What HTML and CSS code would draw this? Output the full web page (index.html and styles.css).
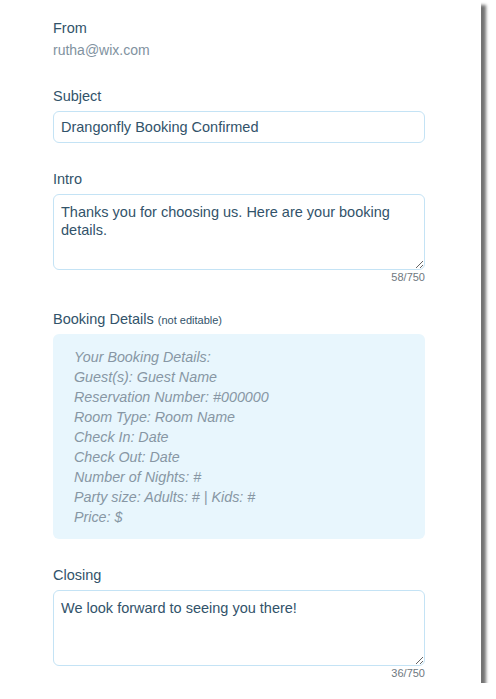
FILE: index.html
```html
<!DOCTYPE html>
<html lang="en">
<head>
    <meta charset="UTF-8">
    <meta name="viewport" content="width=device-width, initial-scale=1.0">
    <title>Confirmation Email</title>
    <link rel="stylesheet" href="styles.css">
</head>
<body>
    <div class="panel">
        <div class="field">
            <div class="label">From</div>
            <div class="sender">rutha@wix.com</div>
        </div>

        <div class="field">
            <label class="label" for="subject">Subject</label>
            <input type="text" id="subject" class="input" value="Drangonfly Booking Confirmed">
        </div>

        <div class="field">
            <label class="label" for="intro">Intro</label>
            <textarea id="intro" class="textarea">Thanks you for choosing us. Here are your booking details.</textarea>
            <div class="counter">58/750</div>
        </div>

        <div class="field">
            <div class="label">Booking Details <span class="note">(not editable)</span></div>
            <div class="details">
                <p>Your Booking Details:</p>
                <p>Guest(s): Guest Name</p>
                <p>Reservation Number: #000000</p>
                <p>Room Type: Room Name</p>
                <p>Check In: Date</p>
                <p>Check Out: Date</p>
                <p>Number of Nights: #</p>
                <p>Party size: Adults: # | Kids: #</p>
                <p>Price: $</p>
            </div>
        </div>

        <div class="field">
            <label class="label" for="closing">Closing</label>
            <textarea id="closing" class="textarea">We look forward to seeing you there!</textarea>
            <div class="counter">36/750</div>
        </div>
    </div>
</body>
</html>
```

FILE: styles.css
```css
:root {
    --text: #32536a;
    --muted: #8192a0;
    --count: #6f7880;
    --border: #c4e3f5;
    --tint: #e8f6fd;
}

* {
    margin: 0;
    padding: 0;
    box-sizing: border-box;
}

body {
    font-family: "Liberation Sans", Arial, sans-serif;
    background: #ffffff;
    color: var(--text);
}

.panel {
    width: 481px;
    height: 683px;
    background: #ffffff;
    padding: 19px 56px 0 53px;
    box-shadow: 5px 5px 3px rgba(0, 0, 0, 0.55);
}

.field {
    display: flex;
    flex-direction: column;
}

.label {
    font-size: 14.5px;
    line-height: 18px;
    height: 18px;
    color: var(--text);
    margin-bottom: 6px;
}

.note {
    font-size: 11px;
    line-height: 1;
}

.sender {
    font-size: 14px;
    line-height: 18px;
    color: var(--muted);
    margin-top: -2px;
    margin-bottom: 28px;
}

.input,
.textarea {
    width: 372px;
    font-family: inherit;
    font-size: 14.5px;
    color: var(--text);
    border: 1px solid var(--border);
    border-radius: 6px;
    background: #ffffff;
    outline: none;
}

.input {
    height: 32px;
    padding: 0 7px;
    margin-bottom: 27px;
}

.textarea {
    height: 76px;
    padding: 8px 7px;
    line-height: 18px;
    resize: vertical;
}

.counter {
    width: 372px;
    text-align: right;
    font-size: 11px;
    line-height: 14px;
    color: var(--count);
    margin-bottom: 26px;
}

.details {
    width: 372px;
    height: 205px;
    background: var(--tint);
    border-radius: 6px;
    padding: 13px 21px;
    margin-bottom: 27px;
}

.details p {
    font-size: 14.3px;
    line-height: 20px;
    font-style: italic;
    color: #8796a4;
}
```
